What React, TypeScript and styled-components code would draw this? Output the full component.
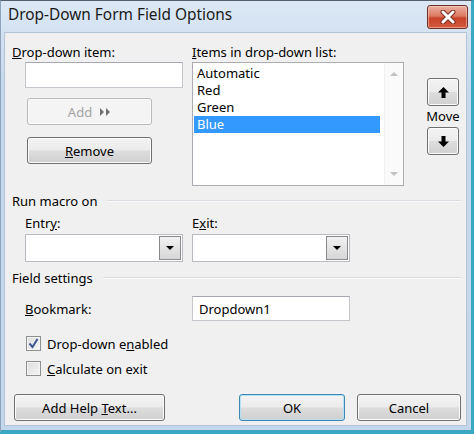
import styled, { createGlobalStyle } from 'styled-components';

const GlobalStyle = createGlobalStyle`
  html, body {
    margin: 0;
    padding: 0;
    background: #ffffff;
  }
  body {
    font-family: "Noto Sans", "DejaVu Sans", sans-serif;
    font-size: 13px;
    color: #000;
  }
`;

const Window = styled.div`
  width: 474px;
  height: 434px;
  box-sizing: border-box;
  display: flex;
  flex-direction: column;
  padding: 0 4px 5px 3px;
  background: linear-gradient(#dce8f5, #c5d8ed 20%, #c3d6eb);
  border-top: 1px solid #55606d;
  border-left: 1px solid #8fa3ba;
  border-right: 3px solid #3ba8c3;
  border-bottom: 4px solid #3ba8c3;
`;

const TitleBar = styled.div`
  height: 31px;
  flex: none;
  display: flex;
  align-items: flex-start;
  justify-content: space-between;
  padding-left: 4px;
`;

const Title = styled.span`
  font-size: 15.4px;
  line-height: 20px;
  margin-top: 4px;
  color: #1a1a1a;
`;

const CloseButton = styled.div`
  width: 41px;
  height: 24px;
  box-sizing: border-box;
  margin-top: 4px;
  margin-right: -1px;
  display: flex;
  align-items: center;
  justify-content: center;
  border: 1px solid #6e2f24;
  border-radius: 3px;
  background: linear-gradient(#eab0a2 0%, #db7a63 45%, #c8442b 55%, #d25a3c 100%);
  box-shadow: inset 0 0 0 1px rgba(255, 220, 210, 0.5);
`;

const Client = styled.div`
  flex: 1;
  display: flex;
  flex-direction: column;
  background: #f0f0f0;
  border: 1px solid #b4c4d6;
  padding: 11px 5px 4px 7px;
`;

const TopRow = styled.div`
  display: flex;
  align-items: flex-start;
`;

const Column = styled.div<{ $width: number; $gap?: number }>`
  width: ${(p) => p.$width}px;
  margin-left: ${(p) => p.$gap ?? 0}px;
  display: flex;
  flex-direction: column;
`;

const Label = styled.span<{ $indent?: number }>`
  line-height: 16px;
  height: 16px;
  white-space: nowrap;
  margin-left: ${(p) => p.$indent ?? 0}px;
`;

const TextBox = styled.div<{ $width: number; $height: number }>`
  width: ${(p) => p.$width}px;
  height: ${(p) => p.$height}px;
  box-sizing: border-box;
  background: #fff;
  border: 1px solid #c4c6cc;
  border-top-color: #a5a8b0;
  padding: 0 6px;
  display: flex;
  align-items: center;
  line-height: 16px;
`;

const Button = styled.div<{ $width: number; $height?: number; $default?: boolean; $disabled?: boolean }>`
  width: ${(p) => p.$width}px;
  height: ${(p) => p.$height ?? 27}px;
  box-sizing: border-box;
  display: flex;
  align-items: center;
  justify-content: center;
  gap: 8px;
  border-radius: 3px;
  border: 1px solid ${(p) => (p.$disabled ? '#b7babc' : p.$default ? '#3d86b8' : '#707070')};
  background: ${(p) =>
    p.$disabled
      ? '#f4f4f4'
      : 'linear-gradient(#f3f3f3 0%, #ebebeb 48%, #dddddd 52%, #d0d0d0 100%)'};
  box-shadow: inset 0 0 0 1px ${(p) => (p.$default ? '#b9e1f6' : '#fbfbfb')};
  color: ${(p) => (p.$disabled ? '#a3a3a3' : '#000')};
  line-height: 16px;
`;

const ListBox = styled.div`
  margin-top: 2px;
  height: 124px;
  box-sizing: border-box;
  display: flex;
  background: #fff;
  border: 1px solid #abadb3;
`;

const ListItems = styled.div`
  flex: 1;
  padding: 2px 4px 0 1px;
  display: flex;
  flex-direction: column;
`;

const ListItem = styled.div<{ $selected?: boolean }>`
  height: 17px;
  line-height: 17px;
  padding-left: 3px;
  background: ${(p) => (p.$selected ? '#3399ff' : 'transparent')};
  color: ${(p) => (p.$selected ? '#fff' : '#000')};
`;

const ScrollBar = styled.div`
  width: 18px;
  display: flex;
  flex-direction: column;
  justify-content: space-between;
  align-items: center;
  padding: 9px 0 9px;
  background: #fafafa;
  border-left: 1px solid #f0f0f0;
`;

const MoveColumn = styled(Column)`
  padding-top: 34px;
  align-items: center;
`;

const MoveLabel = styled.span`
  line-height: 21px;
  height: 21px;
`;

const GroupHeading = styled.div<{ $top: number }>`
  display: flex;
  align-items: center;
  margin-top: ${(p) => p.$top}px;
  line-height: 16px;
  &::after {
    content: '';
    flex: 1;
    margin-left: 10px;
    border-top: 1px solid #d9dde2;
    border-bottom: 1px solid #fbfbfb;
  }
`;

const MacroGrid = styled.div`
  display: grid;
  grid-template-columns: 158px 158px;
  column-gap: 9px;
  row-gap: 3px;
  margin: 6px 0 0 13px;
`;

const Combo = styled.div`
  height: 28px;
  box-sizing: border-box;
  background: #fff;
  border: 1px solid #b8bbc1;
  display: flex;
  justify-content: flex-end;
  padding: 1px;
`;

const ComboButton = styled.div`
  width: 22px;
  box-sizing: border-box;
  display: flex;
  align-items: center;
  justify-content: center;
  border: 1px solid #8a8a8a;
  background: linear-gradient(#f2f2f2, #e4e4e4 50%, #d6d6d6);
`;

const FieldRow = styled.div`
  display: flex;
  align-items: center;
  margin: 10px 0 0 13px;
`;

const CheckRow = styled.label<{ $top?: number }>`
  display: flex;
  align-items: center;
  height: 25px;
  margin: ${(p) => p.$top ?? 0}px 0 0 14px;
  gap: 6px;
  line-height: 16px;
`;

const CheckBox = styled.span`
  width: 15px;
  height: 15px;
  box-sizing: border-box;
  display: flex;
  align-items: center;
  justify-content: center;
  border: 1px solid #8e8f8f;
  background: linear-gradient(135deg, #dcdcdc, #f6f6f6);
  box-shadow: inset 0 0 0 1px #f4f4f4;
`;

const ButtonRow = styled.div`
  display: flex;
  align-items: center;
  margin: 13px 0 0 2px;
  gap: 12px;
`;

const Spacer = styled.div`
  flex: 1;
`;

const CloseIcon = () => (
  <svg width="16" height="14" viewBox="0 0 16 14">
    <path d="M3 2 L13 12 M13 2 L3 12" stroke="#7a2c1e" strokeWidth="5" strokeLinecap="round" />
    <path d="M3 2 L13 12 M13 2 L3 12" stroke="#ffffff" strokeWidth="3" strokeLinecap="round" />
  </svg>
);

const DoubleArrow = () => (
  <svg width="11" height="8" viewBox="0 0 11 8">
    <path d="M0 0 L4 4 L0 8 Z M6 0 L10 4 L6 8 Z" fill="#6f6f6f" />
  </svg>
);

const MoveArrow = ({ down }: { down?: boolean }) => (
  <svg width="11" height="11" viewBox="0 0 11 11" style={down ? { transform: 'rotate(180deg)' } : undefined}>
    <path d="M5.5 0 L11 5.5 H7.5 V11 H3.5 V5.5 H0 Z" fill="#000" />
  </svg>
);

const SmallTriangle = ({ color, up }: { color: string; up?: boolean }) => (
  <svg width="8" height="4" viewBox="0 0 8 4">
    <path d={up ? 'M0 4 L4 0 L8 4 Z' : 'M0 0 L8 0 L4 4 Z'} fill={color} />
  </svg>
);

const CheckMark = () => (
  <svg width="11" height="11" viewBox="0 0 11 11">
    <path d="M1.5 5.5 L4.5 9 L9.5 1" stroke="#3f5a92" strokeWidth="2" fill="none" />
  </svg>
);

const items = ['Automatic', 'Red', 'Green', 'Blue'];

export default function App() {
  return (
    <>
      <GlobalStyle />
      <Window>
        <TitleBar>
          <Title>Drop-Down Form Field Options</Title>
          <CloseButton>
            <CloseIcon />
          </CloseButton>
        </TitleBar>
        <Client>
          <TopRow>
            <Column $width={171}>
              <Label>
                <u>D</u>rop-down item:
              </Label>
              <TextBox $width={158} $height={26} style={{ marginTop: 2, marginLeft: 13 }} />
              <Button $width={125} $disabled style={{ marginTop: 10, marginLeft: 15 }}>
                Add <DoubleArrow />
              </Button>
              <Button $width={125} style={{ marginTop: 12, marginLeft: 15 }}>
                <span>
                  <u>R</u>emove
                </span>
              </Button>
            </Column>
            <Column $width={212} $gap={9}>
              <Label>
                <u>I</u>tems in drop-down list:
              </Label>
              <ListBox>
                <ListItems>
                  {items.map((item) => (
                    <ListItem key={item} $selected={item === 'Blue'}>
                      {item}
                    </ListItem>
                  ))}
                </ListItems>
                <ScrollBar>
                  <SmallTriangle color="#c2c2c2" up />
                  <SmallTriangle color="#c2c2c2" />
                </ScrollBar>
              </ListBox>
            </Column>
            <MoveColumn $width={32} $gap={23}>
              <Button $width={32} $height={28}>
                <MoveArrow />
              </Button>
              <MoveLabel>Move</MoveLabel>
              <Button $width={32} $height={28}>
                <MoveArrow down />
              </Button>
            </MoveColumn>
          </TopRow>

          <GroupHeading $top={7}>Run macro on</GroupHeading>
          <MacroGrid>
            <Label>
              Entr<u>y</u>:
            </Label>
            <Label>
              E<u>x</u>it:
            </Label>
            <Combo>
              <ComboButton>
                <SmallTriangle color="#000" />
              </ComboButton>
            </Combo>
            <Combo>
              <ComboButton>
                <SmallTriangle color="#000" />
              </ComboButton>
            </Combo>
          </MacroGrid>

          <GroupHeading $top={8}>Field settings</GroupHeading>
          <FieldRow>
            <Label style={{ width: 167 }}>
              <u>B</u>ookmark:
            </Label>
            <TextBox $width={158} $height={25}>
              Dropdown1
            </TextBox>
          </FieldRow>

          <CheckRow $top={10}>
            <CheckBox>
              <CheckMark />
            </CheckBox>
            <span>
              Drop-down e<u>n</u>abled
            </span>
          </CheckRow>
          <CheckRow>
            <CheckBox />
            <span>
              <u>C</u>alculate on exit
            </span>
          </CheckRow>

          <ButtonRow>
            <Button $width={151}>
              <span>
                Add Help <u>T</u>ext...
              </span>
            </Button>
            <Spacer />
            <Button $width={106} $default>
              OK
            </Button>
            <Button $width={104}>Cancel</Button>
          </ButtonRow>
        </Client>
      </Window>
    </>
  );
}
